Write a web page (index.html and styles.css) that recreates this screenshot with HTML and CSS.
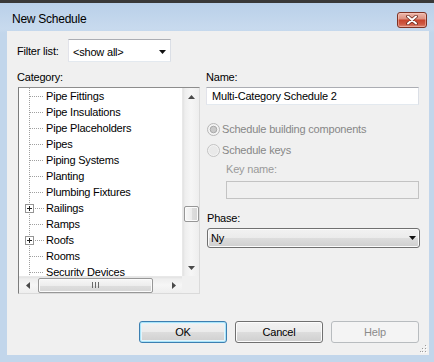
FILE: index.html
```html
<!DOCTYPE html>
<html>
<head>
<meta charset="utf-8">
<link rel="stylesheet" href="styles.css">
</head>
<body>
<div class="screen">
  <div class="window">
    <div class="titlebar">
      <span class="title">New Schedule</span>
      <div class="close">
        <svg width="12" height="10" viewBox="0 0 12 10">
          <path d="M2 1.5L10 8.5M10 1.5L2 8.5" stroke="#6a271b" stroke-width="3.6" stroke-linecap="round"/>
          <path d="M2 1.5L10 8.5M10 1.5L2 8.5" stroke="#ffffff" stroke-width="2" stroke-linecap="round"/>
        </svg>
      </div>
    </div>
    <div class="client">
      <div class="filter-row">
        <span class="filter-lbl">Filter list:</span>
        <div class="combo-edit">
          <span>&lt;show all&gt;</span>
          <svg class="arrow" width="7" height="4" viewBox="0 0 7 4"><polygon points="0,0 7,0 3.5,4" fill="#111"/></svg>
        </div>
      </div>
      <div class="main">
        <div class="left-col">
          <div class="lbl">Category:</div>
          <div class="tree">
            <div class="tree-body">
              <div class="node"><span class="conn"></span><span class="txt">Pipe Fittings</span></div>
              <div class="node"><span class="conn"></span><span class="txt">Pipe Insulations</span></div>
              <div class="node"><span class="conn"></span><span class="txt">Pipe Placeholders</span></div>
              <div class="node"><span class="conn"></span><span class="txt">Pipes</span></div>
              <div class="node"><span class="conn"></span><span class="txt">Piping Systems</span></div>
              <div class="node"><span class="conn"></span><span class="txt">Planting</span></div>
              <div class="node"><span class="conn"></span><span class="txt">Plumbing Fixtures</span></div>
              <div class="node"><span class="conn exp"><span class="plus"><svg width="7" height="7" viewBox="0 0 7 7"><rect x="1" y="3" width="5" height="1" fill="#222"/><rect x="3" y="1" width="1" height="5" fill="#222"/></svg></span></span><span class="txt">Railings</span></div>
              <div class="node"><span class="conn"></span><span class="txt">Ramps</span></div>
              <div class="node"><span class="conn exp"><span class="plus"><svg width="7" height="7" viewBox="0 0 7 7"><rect x="1" y="3" width="5" height="1" fill="#222"/><rect x="3" y="1" width="1" height="5" fill="#222"/></svg></span></span><span class="txt">Roofs</span></div>
              <div class="node"><span class="conn"></span><span class="txt">Rooms</span></div>
              <div class="node"><span class="conn"></span><span class="txt">Security Devices</span></div>
            </div>
            <div class="vscroll">
              <div class="sb-btn"><svg width="7" height="4" viewBox="0 0 7 4"><polygon points="0,4 3.5,0 7,4" fill="#4a4a4a"/></svg></div>
              <div class="vtrack">
                <div class="vgap"></div>
                <div class="vthumb"></div>
              </div>
              <div class="sb-btn"><svg width="7" height="4" viewBox="0 0 7 4"><polygon points="0,0 7,0 3.5,4" fill="#4a4a4a"/></svg></div>
            </div>
            <div class="hscroll">
              <div class="sb-btn h"><svg width="4" height="7" viewBox="0 0 4 7"><polygon points="4,0 4,7 0,3.5" fill="#4a4a4a"/></svg></div>
              <div class="hthumb">
                <svg width="7" height="6" viewBox="0 0 7 6"><rect x="0" y="0" width="1" height="6" fill="#6a6a6a"/><rect x="3" y="0" width="1" height="6" fill="#6a6a6a"/><rect x="6" y="0" width="1" height="6" fill="#6a6a6a"/></svg>
              </div>
              <div class="hspace"></div>
              <div class="sb-btn h"><svg width="4" height="7" viewBox="0 0 4 7"><polygon points="0,0 0,7 4,3.5" fill="#4a4a4a"/></svg></div>
            </div>
            <div class="corner"></div>
          </div>
        </div>
        <div class="right-col">
          <div class="lbl">Name:</div>
          <div class="text-input">Multi-Category Schedule 2</div>
          <div class="radio-row first">
            <svg width="13" height="13" viewBox="0 0 13 13"><circle cx="6.5" cy="6.5" r="6" fill="#f3f3f3" stroke="#b6b6b6"/><circle cx="6.5" cy="6.5" r="3.3" fill="#c9c9c9" stroke="#a9a9a9"/></svg>
            <span class="dis">Schedule building components</span>
          </div>
          <div class="radio-row">
            <svg width="13" height="13" viewBox="0 0 13 13"><circle cx="6.5" cy="6.5" r="6" fill="#f3f3f3" stroke="#c2c2c2"/><circle cx="6.5" cy="6.5" r="4.5" fill="#e9e9e9"/></svg>
            <span class="dis">Schedule keys</span>
          </div>
          <div class="lbl key-lbl">Key name:</div>
          <div class="key-input"></div>
          <div class="lbl phase-lbl">Phase:</div>
          <div class="phase-combo">
            <span>Ny</span>
            <svg width="7" height="4" viewBox="0 0 7 4"><polygon points="0,0 7,0 3.5,4" fill="#111"/></svg>
          </div>
        </div>
      </div>
      <div class="footer">
        <div class="btns">
          <div class="btn default">OK</div>
          <div class="btn">Cancel</div>
          <div class="btn disabled">Help</div>
        </div>
        <svg class="grip" width="7" height="8" viewBox="0 0 7 8">
          <rect x="5" y="0" width="1" height="1" fill="#9a9a9a"/>
          <rect x="2" y="3" width="1" height="1" fill="#9a9a9a"/>
          <rect x="5" y="3" width="1" height="1" fill="#9a9a9a"/>
          <rect x="0" y="6" width="1" height="1" fill="#9a9a9a"/>
          <rect x="2" y="6" width="1" height="1" fill="#9a9a9a"/>
          <rect x="5" y="6" width="1" height="1" fill="#9a9a9a"/>
          <rect x="6" y="1" width="1" height="1" fill="#fff"/>
          <rect x="3" y="4" width="1" height="1" fill="#fff"/>
          <rect x="6" y="4" width="1" height="1" fill="#fff"/>
          <rect x="1" y="7" width="1" height="1" fill="#fff"/>
          <rect x="3" y="7" width="1" height="1" fill="#fff"/>
          <rect x="6" y="7" width="1" height="1" fill="#fff"/>
        </svg>
      </div>
    </div>
  </div>
</div>
</body>
</html>
```
FILE: styles.css
```css
* { box-sizing: border-box; }
body {
  margin: 0;
  background: #3a3a3a;
  font-family: "Liberation Sans", Arial, sans-serif;
  font-size: 11px;
  letter-spacing: -0.2px;
  color: #000;
}
.screen {
  width: 434px;
  height: 362px;
  padding-top: 3px;
  overflow: hidden;
  background: #383838;
}
.window {
  height: 359px;
  display: flex;
  flex-direction: column;
  padding: 0 5px 7px 7px;
  background: linear-gradient(to bottom, #b9d0e9 0, #c8daee 26px, #c2d6eb 30px, #c2d6eb 100%);
}
.titlebar {
  height: 28px;
  flex: none;
  display: flex;
  justify-content: space-between;
  align-items: flex-start;
}
.title {
  font-size: 12px;
  line-height: 14px;
  letter-spacing: -0.25px;
  margin: 9px 0 0 5px;
}
.close {
  width: 30px;
  height: 16px;
  margin: 9px 2px 0 0;
  border: 1px solid #7e3224;
  border-radius: 3px;
  background: linear-gradient(to bottom, #edb8ac 0%, #de9383 40%, #c8452e 52%, #cf5a44 80%, #dd8a78 100%);
  box-shadow: inset 0 0 0 1px rgba(255, 210, 200, 0.45);
  display: flex;
  align-items: center;
  justify-content: center;
}
.client {
  flex: 1;
  background: #f0f0f0;
  display: flex;
  flex-direction: column;
  padding: 8px 0 0 10px;
}
.filter-row {
  display: flex;
  align-items: center;
  height: 23px;
  flex: none;
}
.filter-lbl { width: 51px; }
.combo-edit {
  width: 103px;
  height: 23px;
  background: #fff;
  border: 1px solid;
  border-color: #abadb3 #dbdfe6 #e3e9ef #e2e3ea;
  display: flex;
  align-items: center;
  justify-content: space-between;
  padding: 2px 4px 0 4px;
}
.main {
  display: flex;
  gap: 6px;
  margin-top: 8px;
  padding-right: 9px;
  flex: none;
}
.lbl { line-height: 14px; height: 14px; }
.left-col {
  width: 183px;
  display: flex;
  flex-direction: column;
}
.tree {
  margin: 3px 0 0 1px;
  width: 182px;
  height: 207px;
  border: 1px solid;
  border-color: #8d8d8d #dadada #dadada #7c7c7c;
  background: #fff;
  display: grid;
  grid-template-columns: 1fr 17px;
  grid-template-rows: 188px 17px;
}
.tree-body { overflow: hidden; }
.node {
  display: flex;
  align-items: center;
  height: 16px;
  white-space: nowrap;
}
.conn {
  width: 27px;
  height: 16px;
  flex: none;
  display: flex;
  align-items: center;
  padding-left: 11px;
  background: linear-gradient(to bottom, #a0a0a0 50%, transparent 50%) 10px 0 / 1px 2px repeat-y;
}
.conn::after {
  content: "";
  width: 14px;
  height: 1px;
  background: linear-gradient(to right, #a0a0a0 50%, transparent 50%) 0 0 / 2px 1px repeat-x;
}
.conn.exp { padding-left: 6px; }
.conn.exp::after { width: 10px; margin-left: 1px; }
.plus {
  width: 9px;
  height: 9px;
  border: 1px solid #959595;
  background: #fff;
  display: flex;
  align-items: center;
  justify-content: center;
}
.plus svg { display: block; }
.txt { line-height: 16px; }
.vscroll {
  display: flex;
  flex-direction: column;
  background: linear-gradient(to right, #e2e2e2 0, #eeeeee 2px, #f6f6f6 50%, #eeeeee 100%);
  border-left: 1px solid #e8e8e8;
}
.sb-btn {
  height: 17px;
  flex: none;
  display: flex;
  align-items: center;
  justify-content: center;
}
.sb-btn svg { display: block; }
.sb-btn.h { width: 17px; }
.vtrack { flex: 1; display: flex; flex-direction: column; }
.vgap { height: 101px; flex: none; }
.vthumb {
  height: 16px;
  width: 15px;
  margin-left: 1px;
  border: 1px solid #979797;
  border-radius: 2px;
  background: linear-gradient(to right, #f7f7f7 0%, #ededed 50%, #dedede 51%, #d6d6d6 100%);
  box-shadow: inset 0 0 0 1px #fbfbfb;
}
.hscroll {
  display: flex;
  align-items: center;
  background: linear-gradient(to bottom, #e2e2e2 0, #eeeeee 2px, #f6f6f6 50%, #eeeeee 100%);
  border-top: 1px solid #e8e8e8;
}
.hthumb {
  width: 115px;
  height: 15px;
  margin-left: 2px;
  border: 1px solid #979797;
  border-radius: 2px;
  background: linear-gradient(to bottom, #f7f7f7 0%, #ededed 50%, #dedede 51%, #d6d6d6 100%);
  box-shadow: inset 0 0 0 1px #fbfbfb;
  display: flex;
  align-items: center;
  justify-content: center;
}
.hthumb svg { display: block; }
.hspace { flex: 1; }
.corner { background: #f0f0f0; }
.right-col {
  width: 214px;
  display: flex;
  flex-direction: column;
}
.text-input {
  margin: 3px 1px 0 0;
  height: 18px;
  background: #fff;
  border: 1px solid;
  border-color: #abadb3 #dbdfe6 #e3e9ef #e2e3ea;
  padding: 0 0 0 5px;
  display: flex;
  align-items: center;
}
.radio-row {
  display: flex;
  align-items: center;
  gap: 2px;
  height: 16px;
  margin: 5px 0 0 1px;
}
.radio-row.first { margin-top: 16px; }
.radio-row svg { display: block; flex: none; }
.dis { color: #878787; }
.key-lbl { margin: 4px 0 0 20px; color: #9a9a9a; }
.key-input {
  margin: 5px 1px 0 20px;
  height: 18px;
  background: #f0f0f0;
  border: 1px solid #c3c3c3;
}
.phase-lbl { margin: 12px 0 0 1px; }
.phase-combo {
  margin: 3px 0 0 1px;
  height: 20px;
  border: 1px solid #707070;
  border-radius: 3px;
  background: linear-gradient(to bottom, #f2f2f2 0%, #ebebeb 50%, #dddddd 51%, #cfcfcf 100%);
  box-shadow: inset 0 0 0 1px #fbfbfb;
  display: flex;
  align-items: center;
  justify-content: space-between;
  padding: 0 3px 0 3px;
}
.footer {
  flex: 1;
  margin-top: 27px;
  display: flex;
  justify-content: flex-end;
  align-items: flex-start;
  padding-right: 2px;
}
.btns { display: flex; gap: 8px; }
.btn {
  width: 88px;
  height: 22px;
  border: 1px solid #707070;
  border-radius: 3px;
  background: linear-gradient(to bottom, #f2f2f2 0%, #ebebeb 50%, #dddddd 51%, #cfcfcf 100%);
  box-shadow: inset 0 0 0 1px #fcfcfc;
  display: flex;
  align-items: center;
  justify-content: center;
}
.btn.default {
  border-color: #3c7fb1;
  box-shadow: inset 0 0 0 1px #a9e4f9, inset 0 0 0 2px #e4f4fb;
}
.btn.disabled {
  border-color: #b8bcbf;
  background: #f4f4f4;
  box-shadow: none;
  color: #8b8b8b;
}
.grip {
  display: block;
  align-self: flex-end;
  margin: 0 0 2px 1px;
}
```
